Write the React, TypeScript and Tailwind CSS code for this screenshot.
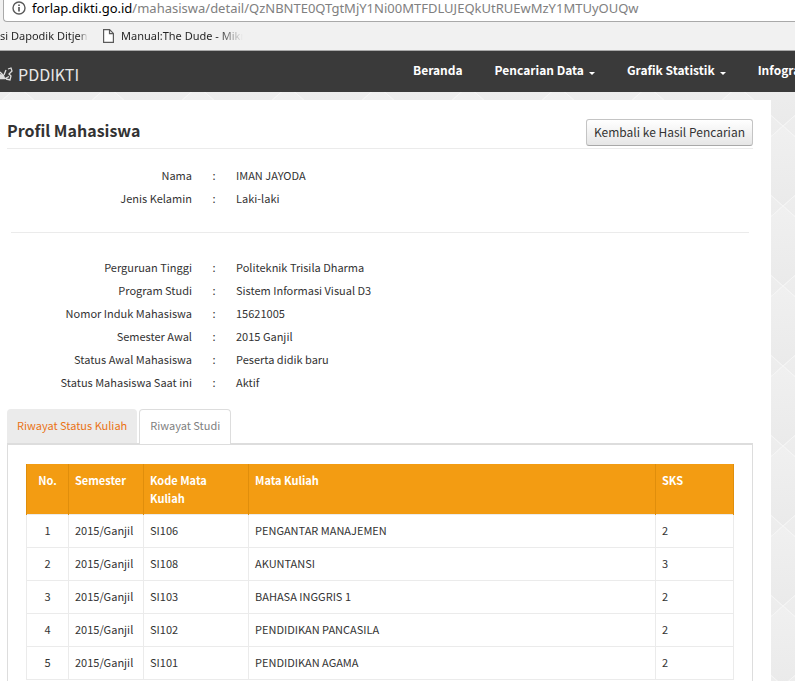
import React from "react";

const student: [string, string][] = [
  ["Nama", "IMAN JAYODA"],
  ["Jenis Kelamin", "Laki-laki"],
];

const study: [string, string][] = [
  ["Perguruan Tinggi", "Politeknik Trisila Dharma"],
  ["Program Studi", "Sistem Informasi Visual D3"],
  ["Nomor Induk Mahasiswa", "15621005"],
  ["Semester Awal", "2015 Ganjil"],
  ["Status Awal Mahasiswa", "Peserta didik baru"],
  ["Status Mahasiswa Saat ini", "Aktif"],
];

const courses = [
  { code: "SI106", name: "PENGANTAR MANAJEMEN", sks: 2 },
  { code: "SI108", name: "AKUNTANSI", sks: 3 },
  { code: "SI103", name: "BAHASA INGGRIS 1", sks: 2 },
  { code: "SI102", name: "PENDIDIKAN PANCASILA", sks: 2 },
  { code: "SI101", name: "PENDIDIKAN AGAMA", sks: 2 },
];

function Browser() {
  return (
    <div className="border-b border-[#a9a9a9] bg-[#f1f1f1] font-['Noto_Sans',sans-serif]">
      <div className="ml-[3px] flex h-[22px] items-center gap-1.5 rounded-bl border-b border-l border-[#a9a9a9] bg-white pb-1.5 pl-2">
        <svg viewBox="0 0 14 14" className="size-3.5 shrink-0" fill="none" stroke="#5a5a5a">
          <circle cx="7" cy="7" r="6" strokeWidth="1.4" />
          <path d="M7 6v4.5M7 3.4v1.7" strokeWidth="1.7" />
        </svg>
        <p className="whitespace-nowrap text-[13px] leading-4 text-[#808080]">
          <span className="text-black">forlap.dikti.go.id</span>
          /mahasiswa/detail/QzNBNTE0QTgtMjY1Ni00MTFDLUJEQkUtRUEwMzY1MTUyOUQw
        </p>
      </div>
      <div className="flex h-7 items-center text-[11px] text-[#222]">
        <a href="#dapodik" className="w-[88px] whitespace-nowrap bg-linear-to-r from-[#222] from-90% to-transparent bg-clip-text text-transparent">
          si Dapodik Ditjen
        </a>
        <svg viewBox="0 0 11 14" className="ml-[15px] h-3.5 w-[11px] shrink-0" fill="#fff" stroke="#5a5a5a" strokeWidth="1.2">
          <path d="M.6.6h6L10.4 4.4V13.4H.6zM6.5.6v4h4" />
        </svg>
        <a href="#dude" className="ml-[7px] w-[122px] whitespace-nowrap bg-linear-to-r from-[#222] from-80% to-transparent bg-clip-text text-transparent">
          Manual:The Dude - Mikr
        </a>
      </div>
    </div>
  );
}

function Caret() {
  return <span className="mt-2 ml-[5px] border-x-[3px] border-t-[3px] border-x-transparent border-t-white" />;
}

function Nav() {
  return (
    <header className="flex h-[41px] items-center overflow-hidden bg-[#3a3a3a] text-white">
      <div className="mt-1 flex w-[413px] shrink-0 items-center gap-[5px]">
        <svg viewBox="0 0 13 16" className="h-4 w-[13px]" fill="none" stroke="#ddd" strokeWidth="1.3">
          <path d="M0 6l3 3M6 4L4 9M0 12.5h5l4-2M8 3l3-1 1 3-3 3 2 2-1 4-4-1M0 9.5l4 1.5" />
          <path d="M0 8l4 1 1 3-5 1z" fill="#ddd" stroke="none" />
        </svg>
        <span className="font-['Noto_Sans_CJK_SC',sans-serif] text-base leading-5 text-[#e8e8e8]">PDDIKTI</span>
      </div>
      <nav className="flex items-center gap-8 pb-1 text-xs leading-[18px] font-bold whitespace-nowrap">
        <a href="#beranda">Beranda</a>
        <a href="#pencarian" className="flex items-center">Pencarian Data <Caret /></a>
        <a href="#grafik" className="flex items-center">Grafik Statistik <Caret /></a>
        <a href="#infografis">Infografis</a>
      </nav>
    </header>
  );
}

function Backdrop() {
  return (
    <svg className="absolute inset-0 -z-10 size-full" aria-hidden="true">
      <defs>
        <linearGradient id="facet" x1="0" y1="0" x2="0" y2="1">
          <stop offset="0" stopColor="#f0f0f0" />
          <stop offset="1" stopColor="#eaeaea" />
        </linearGradient>
        <pattern id="diamonds" x="738" y="34" width="90" height="80" patternUnits="userSpaceOnUse">
          <g fill="url(#facet)" stroke="#f5f5f5">
            <path d="M0-40L45 0L0 40L-45 0z" />
            <path d="M90-40L135 0L90 40L45 0z" />
            <path d="M0 40L45 80L0 120L-45 80z" />
            <path d="M90 40L135 80L90 120L45 80z" />
            <path d="M45 0L90 40L45 80L0 40z" />
          </g>
        </pattern>
      </defs>
      <rect width="100%" height="100%" fill="url(#diamonds)" />
    </svg>
  );
}

function Details({ items }: { items: [string, string][] }) {
  return (
    <dl>
      {items.map(([label, value]) => (
        <div key={label} className="flex h-[23px] items-center">
          <dt className="w-[185px] text-right">{label}</dt>
          <dd className="flex"><span className="w-11 text-center">:</span>{value}</dd>
        </div>
      ))}
    </dl>
  );
}

const cell = "border border-[#ebebeb] px-1.5 pt-1.5 pb-2";
const head = "border-x border-[#e08e0b] px-1.5 py-[7px] align-top";

export default function App() {
  return (
    <div className="flex min-h-screen flex-col overflow-hidden font-['Noto_Sans_CJK_SC',sans-serif] text-[11px] leading-[18px] text-[#333]">
      <Browser />
      <Nav />
      <div className="relative isolate flex flex-1 flex-col pt-2 pr-6">
        <Backdrop />
        <main className="flex flex-1 flex-col bg-white pt-[19px] pr-[18px] pl-[7px]">
          <div className="flex items-start justify-between border-b border-[#ebebeb] pb-0.5">
            <h1 className="text-base leading-[22px] font-bold">Profil Mahasiswa</h1>
            <button className="h-[27px] rounded-[3px] border border-[#c4c4c4] border-b-[#a8a8a8] bg-linear-to-b from-white to-[#e6e6e6] px-[7px] pb-0.5 text-xs">
              Kembali ke Hasil Pencarian
            </button>
          </div>
          <div className="pt-3.5 pb-[23px]"><Details items={student} /></div>
          <hr className="mx-1 border-[#ebebeb]" />
          <div className="pt-[22px] pb-4"><Details items={study} /></div>
          <div role="tablist" className="flex gap-0.5 border-b border-[#ddd]">
            <button role="tab" aria-selected="false" className="h-[34px] rounded-t bg-[#ebebeb] px-2.5 pb-0.5 text-[#ea7316]">Riwayat Status Kuliah</button>
            <button role="tab" aria-selected="true" className="-mb-px h-[35px] rounded-t border border-b-0 border-[#ddd] bg-white px-2.5 pb-1 text-[#808080]">Riwayat Studi</button>
          </div>
          <section className="flex-1 border border-b-0 border-[#ddd] px-[18px] pt-[19px]">
            <table className="w-full table-fixed border-collapse text-left">
              <colgroup>
                <col className="w-[42px]" /><col className="w-[75px]" /><col className="w-[105px]" /><col /><col className="w-[78px]" />
              </colgroup>
              <thead className="bg-[#f39c12] text-white">
                <tr>
                  <th className={head + " text-center"}>No.</th>
                  <th className={head}>Semester</th>
                  <th className={head}>Kode Mata Kuliah</th>
                  <th className={head}>Mata Kuliah</th>
                  <th className={head}>SKS</th>
                </tr>
              </thead>
              <tbody>
                {courses.map((c, i) => (
                  <tr key={c.code}>
                    <td className={cell + " text-center"}>{i + 1}</td>
                    <td className={cell}>2015/Ganjil</td>
                    <td className={cell}>{c.code}</td>
                    <td className={cell}>{c.name}</td>
                    <td className={cell}>{c.sks}</td>
                  </tr>
                ))}
              </tbody>
            </table>
          </section>
        </main>
      </div>
    </div>
  );
}
